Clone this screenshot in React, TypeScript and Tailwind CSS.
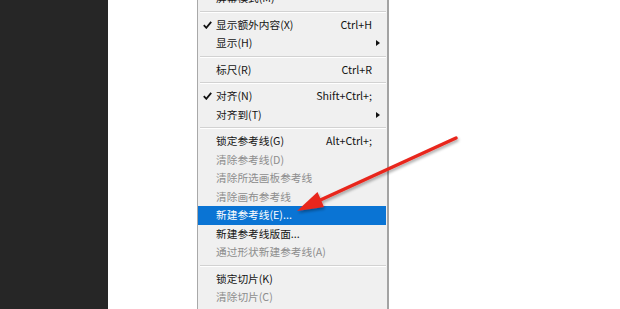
import React from "react";

type Item =
  | { kind: "sep" }
  | {
      kind: "item";
      label: string;
      shortcut?: string;
      check?: boolean;
      sub?: boolean;
      disabled?: boolean;
      active?: boolean;
    };

const items: Item[] = [
  { kind: "item", label: "屏幕模式(M)" },
  { kind: "sep" },
  { kind: "item", label: "显示额外内容(X)", shortcut: "Ctrl+H", check: true },
  { kind: "item", label: "显示(H)", sub: true },
  { kind: "sep" },
  { kind: "item", label: "标尺(R)", shortcut: "Ctrl+R" },
  { kind: "sep" },
  { kind: "item", label: "对齐(N)", shortcut: "Shift+Ctrl+;", check: true },
  { kind: "item", label: "对齐到(T)", sub: true },
  { kind: "sep" },
  { kind: "item", label: "锁定参考线(G)", shortcut: "Alt+Ctrl+;" },
  { kind: "item", label: "清除参考线(D)", disabled: true },
  { kind: "item", label: "清除所选画板参考线", disabled: true },
  { kind: "item", label: "清除画布参考线", disabled: true },
  { kind: "item", label: "新建参考线(E)...", active: true },
  { kind: "item", label: "新建参考线版面..." },
  { kind: "item", label: "通过形状新建参考线(A)", disabled: true },
  { kind: "sep" },
  { kind: "item", label: "锁定切片(K)" },
  { kind: "item", label: "清除切片(C)", disabled: true },
];

function Check() {
  return (
    <svg width="9" height="8" viewBox="0 0 9 8">
      <path d="M0.8 4.2 L3.3 6.8 L8.2 0.9" fill="none" stroke="#111" strokeWidth="1.8" />
    </svg>
  );
}

function Row({ item }: { item: Extract<Item, { kind: "item" }> }) {
  const color = item.active
    ? "text-white"
    : item.disabled
    ? "text-[#8d8d8d]"
    : "text-[#141414]";
  return (
    <div
      className={`relative flex h-[18.5px] items-center pl-[18px] pr-[14px] ${
        item.active ? "bg-[#0a74d4]" : ""
      } ${color}`}
    >
      {item.check && (
        <div className="absolute left-[5px] top-[5px]">
          <Check />
        </div>
      )}
      <span className="flex-1 leading-none">{item.label}</span>
      {item.shortcut && <span className="leading-none">{item.shortcut}</span>}
      {item.sub && (
        <div className="absolute right-[6px] top-[6px] h-0 w-0 border-y-[3.5px] border-l-[4px] border-y-transparent border-l-[#111]" />
      )}
    </div>
  );
}

function Sep() {
  return (
    <div className="flex h-[8px] flex-col justify-center pl-[2px]">
      <div className="h-px bg-[#d2d2d2]" />
      <div className="h-px bg-white" />
    </div>
  );
}

export default function App() {
  return (
    <div
      className="relative flex h-[309px] w-[620px] overflow-hidden bg-white"
      style={{ fontFamily: '"Noto Sans CJK SC", "Noto Sans", sans-serif' }}
    >
      <div className="h-full w-[108px] bg-[#262626]" />
      <div className="h-full w-[89px] bg-white" />
      <div className="h-full w-[192px] border-l border-r-2 border-l-[#a9a9a9] border-r-[#a3a3a3] bg-[#f0f0f0] pr-px text-[10.7px]">
        <div className="-mt-[10.75px]">
          {items.map((it, i) =>
            it.kind === "sep" ? <Sep key={i} /> : <Row key={i} item={it} />
          )}
        </div>
      </div>
      <div className="h-full flex-1 bg-white" />

      <svg
        className="pointer-events-none absolute left-0 top-0"
        width="620"
        height="309"
        viewBox="0 0 620 309"
      >
        <defs>
          <filter id="sh" x="-20%" y="-20%" width="140%" height="140%">
            <feGaussianBlur in="SourceAlpha" stdDeviation="1.5" />
            <feOffset dx="1" dy="2" result="b" />
            <feComponentTransfer>
              <feFuncA type="linear" slope="0.35" />
            </feComponentTransfer>
            <feMerge>
              <feMergeNode />
              <feMergeNode in="SourceGraphic" />
            </feMerge>
          </filter>
        </defs>
        <g filter="url(#sh)">
          <line x1="456" y1="138" x2="316" y2="202" stroke="#e8261c" strokeWidth="3.5" strokeLinecap="round" />
          <polygon points="297,211 317.5,192 324,207" fill="#e8261c" />
        </g>
      </svg>
    </div>
  );
}
